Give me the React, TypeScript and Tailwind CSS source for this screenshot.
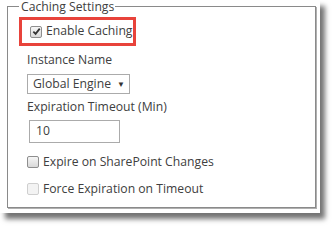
function Box({ checked, disabled }: { checked?: boolean; disabled?: boolean }) {
  return (
    <span
      className={
        'flex w-[12px] h-[12px] shrink-0 items-center justify-center rounded-[2px] border ' +
        (disabled
          ? 'border-[#cfcfcf] bg-[#f3f3f3]'
          : 'border-[#8e8e8e] bg-gradient-to-b from-[#f6f6f6] to-[#d9d9d9]')
      }
    >
      {checked && (
        <svg viewBox="0 0 10 10" className="w-[9px] h-[9px]">
          <path d="M1.5 5.2 L4 7.6 L8.6 1.8" fill="none" stroke="#333" strokeWidth={2} />
        </svg>
      )}
    </span>
  )
}

export default function App() {
  return (
    <div
      className="w-[335px] h-[231px] bg-white text-[12.2px] text-[#404040] whitespace-nowrap"
      style={{ fontFamily: '"Segoe UI", "Open Sans", sans-serif' }}
    >
      <div className="w-[320px] h-[213px] bg-white pt-0 pl-[7px] shadow-[5px_6px_5px_rgba(0,0,0,0.55)]">
        <fieldset className="w-[309px] h-[208px] border border-[#8a8a8a] shadow-[1px_1px_0_#b0b0b0] pl-[11px] pr-2">
          <legend className="pt-[1px] pl-[2px] pr-[1px] leading-[12px]">Caching Settings</legend>
          <div className="mt-[4px] w-[117px] h-[29px] border-[3px] border-[#e8433b] flex items-center gap-[4px] pl-[8px]">
            <Box checked />
            <span className="leading-none">Enable Caching</span>
          </div>
          <div className="pl-[8px]">
            <div className="mt-[7px] leading-[14px]">Instance Name</div>
            <div className="mt-[7px] w-[103px] h-[20px] border border-[#ababab] flex items-center pl-[5px] gap-[6px] leading-none">
              <span>Global Engine</span>
              <span className="text-[8px] text-[#333]">▼</span>
            </div>
            <div className="mt-[6px] leading-[14px]">Expiration Timeout (Min)</div>
            <div className="mt-[6px] ml-[2px] w-[91px] h-[23px] border border-[#ababab] flex items-center pl-[6px] leading-none">
              10
            </div>
            <div className="mt-[12px] flex items-center gap-[4px] h-[14px]">
              <Box />
              <span className="leading-none">Expire on SharePoint Changes</span>
            </div>
            <div className="mt-[13px] flex items-center gap-[4px] h-[14px]">
              <Box disabled />
              <span className="leading-none">Force Expiration on Timeout</span>
            </div>
          </div>
        </fieldset>
      </div>
    </div>
  )
}
